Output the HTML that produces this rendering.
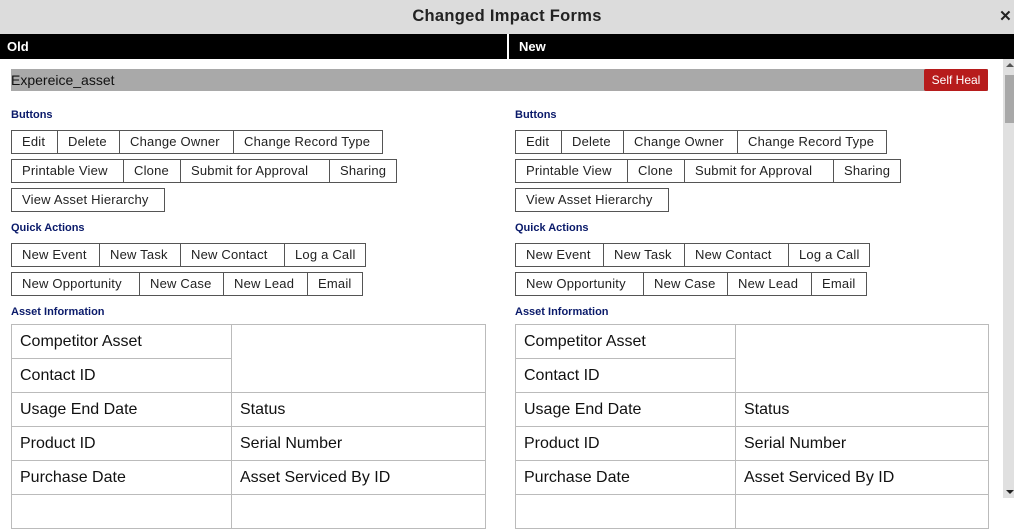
<!DOCTYPE html>
<html><head><style>
*{box-sizing:border-box;margin:0;padding:0}
body{width:1014px;height:498px;overflow:hidden;background:#fff;font-family:"Liberation Sans",sans-serif;position:relative}
.top{position:absolute;left:0;top:0;width:1014px;height:34px;background:#dcdcdc;text-align:center;font-size:16.5px;font-weight:bold;line-height:33px;color:#222;letter-spacing:.3px}
.x{position:absolute;right:2px;top:0;font-size:15px;font-weight:bold;line-height:34px}
.bar{position:absolute;top:34px;height:25px;background:#000;color:#fff;font-weight:bold;font-size:13px;line-height:25px;padding-left:7px}
.hl{position:absolute;left:11px;top:69px;width:977px;height:22px;background:#a9a9a9;font-size:14px;line-height:22px;color:#111}
.sh{position:absolute;right:0;top:0;width:64px;height:22px;background:#b71c1c;color:#fff;font-size:12px;line-height:22px;text-align:center;border-radius:2px}
.lab{position:absolute;font-size:11px;font-weight:bold;color:#0a1a6a}
.row{position:absolute;display:flex;height:24px}
.b{height:24px;border:1px solid #555;margin-right:-1px;font-size:13px;line-height:22px;text-align:left;padding-left:10px;white-space:nowrap;color:#222;background:#fff;letter-spacing:.2px}
table{position:absolute;top:324px;border-collapse:collapse;font-size:16px;color:#111}
td{border:1px solid #bbb;height:34px;padding-left:8px;vertical-align:middle}
.sb{position:absolute;left:1003px;top:59px;width:11px;height:439px;background:#e0e0e0}
.th{position:absolute;left:1005px;top:75px;width:9px;height:48px;background:#a8a8a8}
</style></head><body>
<div class="top">Changed Impact Forms<span class="x">✕</span></div>
<div class="bar" style="left:0;width:507px">Old</div>
<div class="bar" style="left:509px;width:505px;padding-left:10px">New</div>
<div class="hl">Expereice_asset<div class="sh">Self Heal</div></div>

<div class="lab" style="left:11px;top:109px">Buttons</div>
<div class="lab" style="left:515px;top:109px">Buttons</div>
<div class="lab" style="left:11px;top:222px">Quick Actions</div>
<div class="lab" style="left:515px;top:222px">Quick Actions</div>
<div class="lab" style="left:11px;top:306px">Asset Information</div>
<div class="lab" style="left:515px;top:306px">Asset Information</div>

<div class="row" style="left:11px;top:130px"><div class="b" style="width:47px">Edit</div><div class="b" style="width:63px">Delete</div><div class="b" style="width:115px">Change Owner</div><div class="b" style="width:150px">Change Record Type</div></div>
<div class="row" style="left:11px;top:159px"><div class="b" style="width:113px">Printable View</div><div class="b" style="width:58px">Clone</div><div class="b" style="width:150px">Submit for Approval</div><div class="b" style="width:68px">Sharing</div></div>
<div class="row" style="left:11px;top:188px"><div class="b" style="width:154px">View Asset Hierarchy</div></div>
<div class="row" style="left:11px;top:243px"><div class="b" style="width:89px">New Event</div><div class="b" style="width:82px">New Task</div><div class="b" style="width:105px">New Contact</div><div class="b" style="width:82px">Log a Call</div></div>
<div class="row" style="left:11px;top:272px"><div class="b" style="width:129px">New Opportunity</div><div class="b" style="width:85px">New Case</div><div class="b" style="width:85px">New Lead</div><div class="b" style="width:56px">Email</div></div>

<div class="row" style="left:515px;top:130px"><div class="b" style="width:47px">Edit</div><div class="b" style="width:63px">Delete</div><div class="b" style="width:115px">Change Owner</div><div class="b" style="width:150px">Change Record Type</div></div>
<div class="row" style="left:515px;top:159px"><div class="b" style="width:113px">Printable View</div><div class="b" style="width:58px">Clone</div><div class="b" style="width:150px">Submit for Approval</div><div class="b" style="width:68px">Sharing</div></div>
<div class="row" style="left:515px;top:188px"><div class="b" style="width:154px">View Asset Hierarchy</div></div>
<div class="row" style="left:515px;top:243px"><div class="b" style="width:89px">New Event</div><div class="b" style="width:82px">New Task</div><div class="b" style="width:105px">New Contact</div><div class="b" style="width:82px">Log a Call</div></div>
<div class="row" style="left:515px;top:272px"><div class="b" style="width:129px">New Opportunity</div><div class="b" style="width:85px">New Case</div><div class="b" style="width:85px">New Lead</div><div class="b" style="width:56px">Email</div></div>

<table style="left:11px;width:475px"><tr><td style="width:220px">Competitor Asset</td><td rowspan="2"></td></tr><tr><td>Contact ID</td></tr><tr><td>Usage End Date</td><td>Status</td></tr><tr><td>Product ID</td><td>Serial Number</td></tr><tr><td>Purchase Date</td><td>Asset Serviced By ID</td></tr><tr><td></td><td></td></tr></table>
<table style="left:515px;width:474px"><tr><td style="width:220px">Competitor Asset</td><td rowspan="2"></td></tr><tr><td>Contact ID</td></tr><tr><td>Usage End Date</td><td>Status</td></tr><tr><td>Product ID</td><td>Serial Number</td></tr><tr><td>Purchase Date</td><td>Asset Serviced By ID</td></tr><tr><td></td><td></td></tr></table>

<div class="sb"></div><div class="th"></div>
<div style="position:absolute;left:1006px;top:63px;width:0;height:0;border-left:4px solid transparent;border-right:4px solid transparent;border-bottom:4px solid #555"></div>
<div style="position:absolute;left:1006px;top:490px;width:0;height:0;border-left:4px solid transparent;border-right:4px solid transparent;border-top:4px solid #222"></div>
</body></html>
